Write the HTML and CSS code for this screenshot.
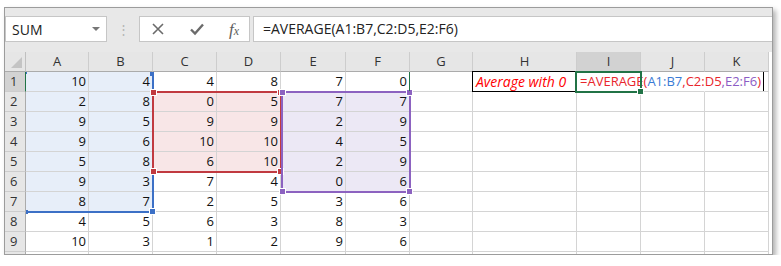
FILE: index.html
```html
<!DOCTYPE html>
<html lang="en">
<head>
    <meta charset="UTF-8">
    <title>AVERAGE with zeros</title>
    <link rel="stylesheet" href="styles.css">
</head>
<body>
<div class="window">
    <!-- formula bar -->
    <div class="bar">
        <div class="namebox">
            <span>SUM</span>
            <span class="drop"></span>
        </div>
        <div class="grip">⋮</div>
        <div class="buttons">
            <svg width="14" height="14" viewBox="0 0 14 14"><path d="M2 2L12 12M12 2L2 12" stroke="#6b6b6b" stroke-width="1.6" fill="none"/></svg>
            <svg width="16" height="14" viewBox="0 0 16 14"><path d="M2 7.5L6 11.5L14 2.5" stroke="#6b6b6b" stroke-width="2.4" fill="none"/></svg>
            <span class="fx">f<sub>x</sub></span>
        </div>
        <div class="formula">=AVERAGE(A1:B7,C2:D5,E2:F6)</div>
    </div>

    <!-- sheet -->
    <div class="sheet">
        <div class="corner"><span></span></div>
        <div class="ch">A</div><div class="ch">B</div><div class="ch">C</div><div class="ch">D</div>
        <div class="ch">E</div><div class="ch">F</div><div class="ch">G</div><div class="ch">H</div>
        <div class="ch active">I</div><div class="ch">J</div><div class="ch">K</div>

        <div class="rh active">1</div>
        <div class="c blue">10</div><div class="c blue">4</div><div class="c">4</div><div class="c">8</div>
        <div class="c">7</div><div class="c">0</div><div class="c"></div><div class="c"></div>
        <div class="c nol"></div><div class="c nol"></div><div class="c"></div>

        <div class="rh">2</div>
        <div class="c blue">2</div><div class="c blue">8</div><div class="c red">0</div><div class="c red">5</div>
        <div class="c violet">7</div><div class="c violet">7</div><div class="c"></div><div class="c"></div>
        <div class="c"></div><div class="c"></div><div class="c"></div>

        <div class="rh">3</div>
        <div class="c blue">9</div><div class="c blue">5</div><div class="c red">9</div><div class="c red">9</div>
        <div class="c violet">2</div><div class="c violet">9</div><div class="c"></div><div class="c"></div>
        <div class="c"></div><div class="c"></div><div class="c"></div>

        <div class="rh">4</div>
        <div class="c blue">9</div><div class="c blue">6</div><div class="c red">10</div><div class="c red">10</div>
        <div class="c violet">4</div><div class="c violet">5</div><div class="c"></div><div class="c"></div>
        <div class="c"></div><div class="c"></div><div class="c"></div>

        <div class="rh">5</div>
        <div class="c blue">5</div><div class="c blue">8</div><div class="c red">6</div><div class="c red">10</div>
        <div class="c violet">2</div><div class="c violet">9</div><div class="c"></div><div class="c"></div>
        <div class="c"></div><div class="c"></div><div class="c"></div>

        <div class="rh">6</div>
        <div class="c blue">9</div><div class="c blue">3</div><div class="c">7</div><div class="c">4</div>
        <div class="c violet">0</div><div class="c violet">6</div><div class="c"></div><div class="c"></div>
        <div class="c"></div><div class="c"></div><div class="c"></div>

        <div class="rh">7</div>
        <div class="c blue">8</div><div class="c blue">7</div><div class="c">2</div><div class="c">5</div>
        <div class="c">3</div><div class="c">6</div><div class="c"></div><div class="c"></div>
        <div class="c"></div><div class="c"></div><div class="c"></div>

        <div class="rh">8</div>
        <div class="c">4</div><div class="c">5</div><div class="c">6</div><div class="c">3</div>
        <div class="c">8</div><div class="c">3</div><div class="c"></div><div class="c"></div>
        <div class="c"></div><div class="c"></div><div class="c"></div>

        <div class="rh">9</div>
        <div class="c">10</div><div class="c">3</div><div class="c">1</div><div class="c">2</div>
        <div class="c">9</div><div class="c">6</div><div class="c"></div><div class="c"></div>
        <div class="c"></div><div class="c"></div><div class="c"></div>

        <div class="rh"></div>
        <div class="c"></div><div class="c"></div><div class="c"></div><div class="c"></div>
        <div class="c"></div><div class="c"></div><div class="c"></div><div class="c"></div>
        <div class="c"></div><div class="c"></div><div class="c"></div>

        <!-- range highlights drawn over the grid -->
        <div class="rng rng-blue">
            <i class="hd hd-tl"></i><i class="hd hd-tr"></i><i class="hd hd-bl"></i><i class="hd hd-br"></i>
        </div>
        <div class="rng rng-red">
            <i class="hd hd-tl"></i><i class="hd hd-tr"></i><i class="hd hd-bl"></i><i class="hd hd-br"></i>
        </div>
        <div class="rng rng-violet">
            <i class="hd hd-tl"></i><i class="hd hd-tr"></i><i class="hd hd-bl"></i><i class="hd hd-br"></i>
        </div>

        <div class="mark-f1"></div>
        <div class="label-h1">Average with 0</div>
        <div class="edit">=AVERAGE(<span class="t-blue">A1:B7</span>,<span class="t-red">C2:D5</span><span class="t-violet">,E2:F6</span>)</div>
        <div class="cursor"><i class="fill"></i></div>
    </div>
</div>
</body>
</html>
```
FILE: styles.css
```css
body {
    margin: 0;
    background: #fff;
    font-family: "Open Sans", "Liberation Sans", sans-serif;
}

.window {
    margin: 7px 0 0 4px;
    width: 769px;
    height: 248px;
    box-sizing: border-box;
    border: 1px solid #9c9c9c;
    background: #e8e8e8;
    box-shadow: 3px 3px 5px rgba(0, 0, 0, 0.3);
    overflow: hidden;
}

/* formula bar */
.bar {
    display: flex;
    align-items: center;
    height: 26px;
    margin-top: 8px;
}

.namebox {
    width: 102px;
    height: 26px;
    box-sizing: border-box;
    border: 1px solid #c6c6c6;
    background: #fff;
    display: flex;
    align-items: center;
    justify-content: space-between;
    padding: 0 6px 0 6px;
    font-size: 14px;
    color: #222;
}

.drop {
    width: 0;
    height: 0;
    border-left: 4px solid transparent;
    border-right: 4px solid transparent;
    border-top: 4px solid #777;
}

.grip {
    width: 32px;
    text-align: center;
    color: #b4b4b4;
    font-size: 13px;
}

.buttons {
    width: 111px;
    height: 26px;
    box-sizing: border-box;
    border: 1px solid #c6c6c6;
    background: #fff;
    display: flex;
    align-items: center;
    justify-content: space-between;
    padding: 0 10px 0 11px;
}

.fx {
    font-family: "Liberation Serif", serif;
    font-style: italic;
    font-size: 17px;
    color: #5e5e5e;
    line-height: 1;
}

.fx sub {
    font-size: 12px;
    vertical-align: 0;
}

.formula {
    flex: 1;
    height: 26px;
    margin-left: 3px;
    box-sizing: border-box;
    border: 1px solid #c6c6c6;
    border-right: none;
    background: #fff;
    padding-left: 9px;
    line-height: 24px;
    font-size: 14px;
    color: #222;
}

/* sheet */
.sheet {
    position: relative;
    margin-top: 10px;
    display: grid;
    grid-template-columns: 21px 63px 64px 64px 64px 65px 64px 63px 104px 64px 64px 64px;
    grid-auto-rows: 20px;
    background: #fff;
    font-size: 13px;
    color: #111;
}

.corner {
    background: #e6e6e6;
    border-right: 1px solid #c0c0c0;
    border-bottom: 1px solid #ababab;
    position: relative;
}

.corner span {
    position: absolute;
    right: 3px;
    bottom: 3px;
    width: 0;
    height: 0;
    border-left: 11px solid transparent;
    border-bottom: 11px solid #c4c4c4;
}

.ch {
    background: #e6e6e6;
    border-right: 1px solid #cdcdcd;
    border-bottom: 1px solid #ababab;
    text-align: center;
    line-height: 19px;
    color: #333;
}

.ch.active {
    background: #d2d2d2;
}

.rh {
    background: #e6e6e6;
    border-right: 1px solid #ababab;
    border-bottom: 1px solid #cdcdcd;
    padding-left: 5px;
    line-height: 19px;
    color: #333;
}

.rh.active {
    background: #d2d2d2;
    border-right: 1px solid #217346;
}

.c {
    border-right: 1px solid #d4d4d4;
    border-bottom: 1px solid #d4d4d4;
    text-align: right;
    padding-right: 2px;
    line-height: 19px;
}

.c.nol {
    border-right-color: transparent;
}

.blue {
    background: #e7eef9;
}

.red {
    background: #f8e6e7;
}

.violet {
    background: #ece8f5;
}

/* coloured reference ranges */
.rng {
    position: absolute;
    box-sizing: border-box;
}

.rng-blue {
    left: 21px;
    top: 20px;
    width: 128px;
    height: 141px;
    border-right: 2px solid #3c70c6;
    border-bottom: 2px solid #3c70c6;
    color: #3c70c6;
}

.rng-red {
    left: 147px;
    top: 39px;
    width: 130px;
    height: 82px;
    border: 2px solid #c13a40;
    color: #c13a40;
}

.rng-violet {
    left: 276px;
    top: 39px;
    width: 130px;
    height: 102px;
    border: 2px solid #8c62c0;
    color: #8c62c0;
}

.hd {
    position: absolute;
    width: 5px;
    height: 5px;
    background: currentColor;
    border: 1px solid #fff;
}

.hd-tl { left: -4px; top: -4px; }
.hd-tr { right: -4px; top: -4px; }
.hd-bl { left: -4px; bottom: -4px; }
.hd-br { right: -4px; bottom: -4px; }

.rng-blue .hd-tl { left: 0; top: 0; width: 1px; height: 2px; border: none; }
.rng-blue .hd-tr { right: -2px; top: 0; width: 4px; height: 4px; border: none; }
.rng-blue .hd-bl { left: 0; bottom: -3px; width: 2px; height: 4px; border: none; }

.mark-f1 {
    position: absolute;
    left: 404px;
    top: 20px;
    width: 1px;
    height: 19px;
    background: #217346;
}

.label-h1 {
    position: absolute;
    left: 467px;
    top: 19px;
    width: 106px;
    height: 21px;
    box-sizing: border-box;
    border: 1px solid #000;
    background: #fff;
    padding-left: 3px;
    line-height: 19px;
    font-size: 14px;
    font-style: italic;
    color: #ff0000;
}

.edit {
    position: absolute;
    left: 572px;
    top: 20px;
    width: 187px;
    height: 19px;
    box-sizing: border-box;
    background: #fff;
    border-right: 1px solid #000;
    padding-left: 3px;
    line-height: 19px;
    font-size: 13px;
    white-space: nowrap;
    color: #e8262c;
}

.t-blue { color: #3a7bd5; }
.t-red { color: #e8262c; }
.t-violet { color: #8b5cc4; }

.cursor {
    position: absolute;
    left: 570px;
    top: 19px;
    width: 67px;
    height: 22px;
    box-sizing: border-box;
    border: 2px solid #217346;
}

.fill {
    position: absolute;
    right: -4px;
    bottom: -4px;
    width: 5px;
    height: 5px;
    background: #217346;
    border: 1px solid #fff;
}
```
